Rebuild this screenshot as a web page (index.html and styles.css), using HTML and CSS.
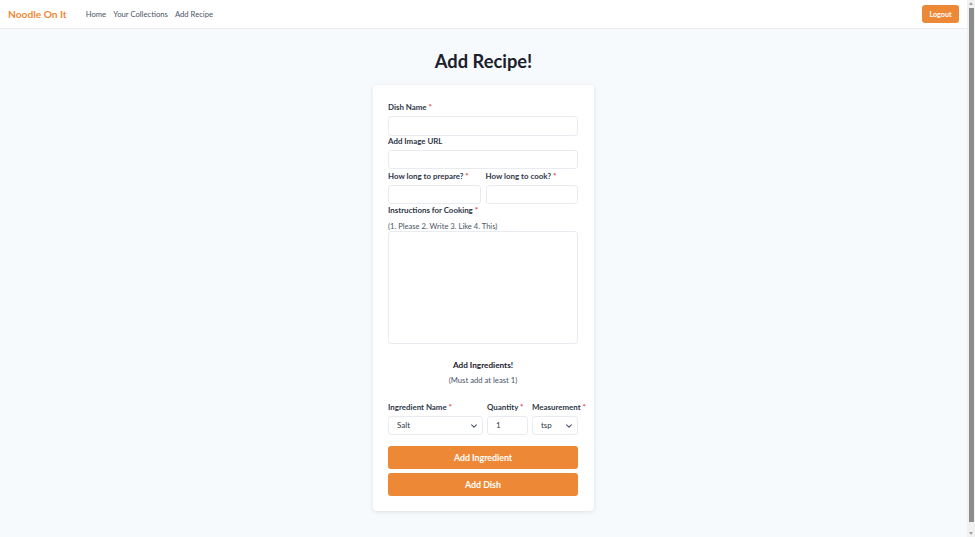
FILE: index.html
```html
<!DOCTYPE html>
<html lang="en">
<head>
<meta charset="utf-8">
<title>Noodle On It - Add Recipe</title>
<link rel="stylesheet" href="styles.css">
</head>
<body>
<div class="page">
  <nav class="nav">
    <div class="nav-left">
      <a class="logo" href="#">Noodle On It</a>
      <div class="links">
        <a href="#">Home</a>
        <a href="#">Your Collections</a>
        <a href="#">Add Recipe</a>
      </div>
    </div>
    <button class="logout">Logout</button>
  </nav>
  <main class="main">
    <h1 class="title">Add Recipe!</h1>
    <form class="card">
      <div class="field">
        <label class="label">Dish Name <span class="req">*</span></label>
        <input class="input" type="text">
      </div>
      <div class="field">
        <label class="label">Add Image URL</label>
        <input class="input" type="text">
      </div>
      <div class="row2">
        <div class="field">
          <label class="label">How long to prepare? <span class="req">*</span></label>
          <input class="input" type="text">
        </div>
        <div class="field">
          <label class="label">How long to cook? <span class="req">*</span></label>
          <input class="input" type="text">
        </div>
      </div>
      <div class="field instr">
        <label class="label">Instructions for Cooking <span class="req">*</span></label>
        <p class="hint">(1. Please 2. Write 3. Like 4. This)</p>
        <textarea class="input textarea"></textarea>
      </div>
      <div class="ing-head">
        <p class="ing-title">Add Ingredients!</p>
        <p class="ing-sub">(Must add at least 1)</p>
      </div>
      <div class="ing-row">
        <div class="field">
          <label class="label nowrap">Ingredient Name <span class="req">*</span></label>
          <div class="select-wrap">
            <select class="input select"><option>Salt</option></select>
            <svg class="chev" viewBox="0 0 10 6" width="6" height="4"><path d="M1 1l4 4 4-4" fill="none" stroke="#4a5568" stroke-width="1.8" stroke-linecap="round" stroke-linejoin="round"/></svg>
          </div>
        </div>
        <div class="field">
          <label class="label nowrap">Quantity <span class="req">*</span></label>
          <input class="input qty" type="text" value="1">
        </div>
        <div class="field">
          <label class="label nowrap">Measurement <span class="req">*</span></label>
          <div class="select-wrap">
            <select class="input select"><option>tsp</option></select>
            <svg class="chev" viewBox="0 0 10 6" width="6" height="4"><path d="M1 1l4 4 4-4" fill="none" stroke="#4a5568" stroke-width="1.8" stroke-linecap="round" stroke-linejoin="round"/></svg>
          </div>
        </div>
      </div>
      <button type="button" class="btn btn-first">Add Ingredient</button>
      <button type="button" class="btn">Add Dish</button>
    </form>
  </main>
</div>
<div class="scrollbar" aria-hidden="true">
  <span class="arrow-up"></span>
  <span class="thumb"></span>
  <span class="arrow-down"></span>
</div>
</body>
</html>
```
FILE: styles.css
```css
body {
  margin: 0;
  font-family: "Lato", "Open Sans", sans-serif;
  background: #f7fafc;
  color: #2d3748;
  display: flex;
  align-items: flex-start;
}
.page {
  flex: 1;
  min-width: 0;
}
.scrollbar {
  position: sticky;
  top: 0;
  width: 8px;
  height: 537px;
  background: #f1f1f1;
  display: flex;
  flex-direction: column;
  align-items: center;
}
.arrow-up,
.arrow-down {
  width: 0;
  height: 0;
  border-left: 2.5px solid transparent;
  border-right: 2.5px solid transparent;
}
.arrow-up {
  margin-top: 2px;
  border-bottom: 3px solid #a3a3a3;
}
.arrow-down {
  margin-bottom: 2px;
  border-top: 3px solid #a3a3a3;
}
.thumb {
  flex: 1;
  width: 5px;
  margin: 3px 0 10px;
  background: #8c8c8c;
}
.nav {
  height: 28px;
  background: #fff;
  border-bottom: 1px solid #e9edf2;
  display: flex;
  align-items: center;
  justify-content: space-between;
  padding: 0 8px;
}
.nav-left {
  display: flex;
  align-items: center;
  gap: 19px;
}
.logo {
  color: #ed8936;
  font-weight: 700;
  font-size: 10.2px;
  text-decoration: none;
}
.links {
  display: flex;
  gap: 7px;
}
.links a {
  color: #4a5568;
  font-size: 7.7px;
  text-decoration: none;
}
.logout {
  background: #ed8936;
  color: #fff;
  border: 0;
  border-radius: 3px;
  font-family: inherit;
  font-weight: 700;
  font-size: 7.2px;
  width: 37px;
  height: 18px;
  padding: 0;
}
.main {
  padding: 20px 0 32px;
  display: flex;
  flex-direction: column;
  align-items: center;
}
.title {
  margin: 0 0 12px;
  font-size: 18.3px;
  line-height: 24px;
  font-weight: 700;
  color: #1a202c;
}
.card {
  width: 190px;
  background: #fff;
  border-radius: 4px;
  box-shadow: 0 1px 4px rgba(0, 0, 0, 0.1);
  padding: 17px 16px 15px 15px;
  display: flex;
  flex-direction: column;
}
.field {
  display: flex;
  flex-direction: column;
  min-width: 0;
}
.label {
  font-size: 7.9px;
  line-height: 11.5px;
  font-weight: 700;
  color: #2d3748;
  margin-bottom: 2.5px;
}
.nowrap {
  white-space: nowrap;
}
.req {
  color: #e53e3e;
}
.input {
  box-sizing: border-box;
  display: block;
  height: 19.5px;
  width: 100%;
  border: 1px solid #e8ecf0;
  border-radius: 3px;
  background: #fff;
  font-family: inherit;
  font-size: 8px;
  color: #2d3748;
  padding: 0 7px;
  margin: 0;
  outline: none;
}
.row2 {
  display: grid;
  grid-template-columns: 1fr 1fr;
  gap: 5px;
  margin-top: 1.5px;
}
.instr {
  margin-top: 1px;
}
.hint {
  margin: 1.5px 0 0;
  font-size: 7.6px;
  line-height: 10px;
  color: #4a5568;
}
.textarea {
  height: 113px;
  resize: none;
}
.ing-head {
  margin-top: 15px;
  text-align: center;
}
.ing-title {
  margin: 0;
  font-size: 8.2px;
  line-height: 12px;
  font-weight: 700;
  color: #1a202c;
}
.ing-sub {
  margin: 3px 0 0;
  font-size: 7.7px;
  line-height: 12px;
  color: #4a5568;
}
.ing-row {
  margin-top: 16px;
  display: grid;
  grid-template-columns: 95px 41px 46px;
  gap: 4px;
}
.select-wrap {
  position: relative;
}
.select {
  appearance: none;
  -webkit-appearance: none;
  padding-left: 8px;
}
.chev {
  position: absolute;
  right: 6px;
  top: 8px;
  pointer-events: none;
}
.qty {
  padding-left: 8px;
}
.btn {
  height: 23px;
  background: #ed8936;
  color: #fff;
  border: 0;
  border-radius: 3px;
  font-family: inherit;
  font-weight: 700;
  font-size: 8.8px;
  margin-top: 4px;
  padding: 0;
}
.btn-first {
  margin-top: 11px;
}
```
